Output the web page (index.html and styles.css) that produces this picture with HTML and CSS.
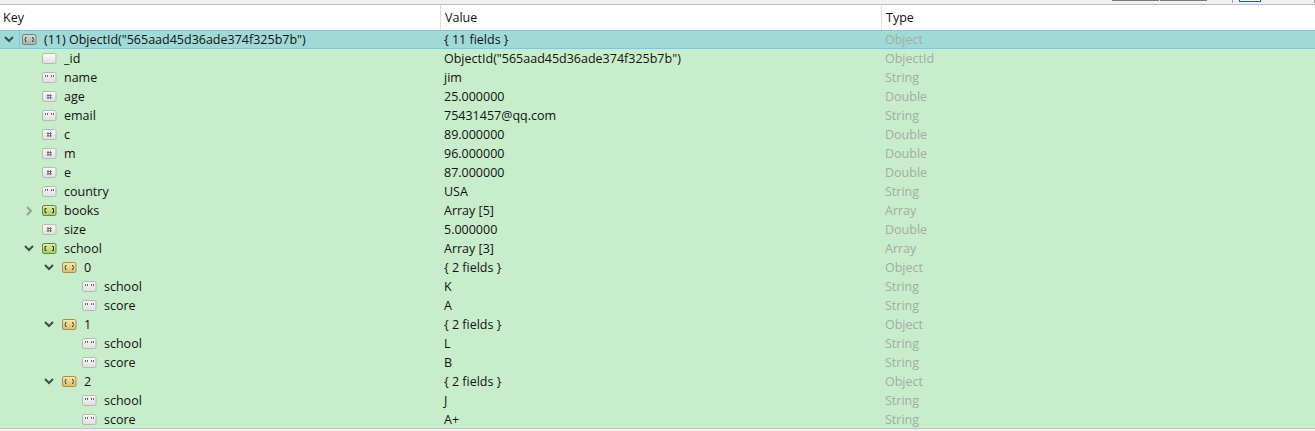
FILE: index.html
```html
<!DOCTYPE html>
<html lang="en">
<head>
<meta charset="utf-8">
<title>Document tree</title>
<link rel="stylesheet" href="styles.css">
</head>
<body>
<svg class="defs" width="0" height="0" aria-hidden="true">
  <defs>
    <linearGradient id="gw" x1="0" y1="0" x2="0" y2="1"><stop offset="0" stop-color="#fcfcfc"/><stop offset="1" stop-color="#dedede"/></linearGradient>
    <linearGradient id="gg" x1="0" y1="0" x2="0" y2="1"><stop offset="0" stop-color="#e4eea8"/><stop offset="1" stop-color="#a8cc62"/></linearGradient>
    <linearGradient id="gy" x1="0" y1="0" x2="0" y2="1"><stop offset="0" stop-color="#f6e9b2"/><stop offset="1" stop-color="#d8bd70"/></linearGradient>
    <linearGradient id="gt" x1="0" y1="0" x2="0" y2="1"><stop offset="0" stop-color="#d4dcd8"/><stop offset="1" stop-color="#a4b0ab"/></linearGradient>
    <symbol id="i-blank" viewBox="0 0 16 12"><rect x=".5" y=".5" width="13.500" height="10" rx="1.500" fill="url(#gw)" stroke="#b8b8b8"/></symbol>
    <symbol id="i-str" viewBox="0 0 16 12"><rect x=".5" y=".5" width="13.500" height="10" rx="1.500" fill="url(#gw)" stroke="#b8b8b8"/><path d="M3.500 3v2M5.500 3v2M9.500 3v2M11.500 3v2" stroke="#666" fill="none"/></symbol>
    <symbol id="i-num" viewBox="0 0 16 12"><rect x=".5" y=".5" width="13.500" height="10" rx="1.500" fill="url(#gw)" stroke="#b8b8b8"/><path d="M6 3v5M8.500 3v5M4.800 4.500h5M4.800 6.800h5" stroke="#666" stroke-width=".9" fill="none"/></symbol>
    <symbol id="i-arr" viewBox="0 0 16 12"><rect x=".5" y=".5" width="13.500" height="10" rx="1.500" fill="url(#gg)" stroke="#5f8a3c"/><path d="M4.500 3.500h-1.500v4h1.500M10 3.500h1.500v4h-1.500" stroke="#1f3310" fill="none"/></symbol>
    <symbol id="i-obj" viewBox="0 0 16 12"><rect x=".5" y=".5" width="13.500" height="10" rx="1.500" fill="url(#gy)" stroke="#a88f50"/><path d="M4.500 3.500h-1v1.500l-.8.500.8.500v1.500h1M10 3.500h1v1.500l.8.500-.8.500v1.500h-1" stroke="#4a3c18" stroke-width=".9" fill="none"/></symbol>
    <symbol id="i-root" viewBox="0 0 16 12"><rect x=".5" y=".5" width="13.500" height="10" rx="1.500" fill="url(#gt)" stroke="#76847f"/><path d="M4.500 3.500h-1v1.500l-.8.500.8.500v1.500h1M10 3.500h1v1.500l.8.500-.8.500v1.500h-1" stroke="#2c3330" stroke-width=".9" fill="none"/></symbol>
    <symbol id="c-open" viewBox="0 0 10 7"><path d="M1 1l4 4 4-4" fill="none" stroke="#3f4f46" stroke-width="2"/></symbol>
    <symbol id="c-closed" viewBox="0 0 7 10"><path d="M1 1l4 4-4 4" fill="none" stroke="#8fa596" stroke-width="2"/></symbol>
  </defs>
</svg>
<div class="topstrip">
  <span class="tab"></span><span class="tab"></span>
  <span class="sep sep-a"></span><span class="blue"></span><span class="sep sep-b"></span>
</div>
<div class="grid-row header">
  <div class="hcell">Key</div><div class="hcell">Value</div><div class="hcell">Type</div>
</div>
<div class="tree">
  <div class="grid-row row selected">
    <div class="key lvl0"><svg class="chev-open"><use href="#c-open"/></svg><svg class="icon"><use href="#i-root"/></svg><span>(11) ObjectId("565aad45d36ade374f325b7b")</span></div>
    <div class="val">{ 11 fields }</div><div class="type">Object</div>
  </div>
  <div class="grid-row row"><div class="key lvl1"><i class="nochev"></i><svg class="icon"><use href="#i-blank"/></svg><span>_id</span></div><div class="val">ObjectId("565aad45d36ade374f325b7b")</div><div class="type">ObjectId</div></div>
  <div class="grid-row row"><div class="key lvl1"><i class="nochev"></i><svg class="icon"><use href="#i-str"/></svg><span>name</span></div><div class="val">jim</div><div class="type">String</div></div>
  <div class="grid-row row"><div class="key lvl1"><i class="nochev"></i><svg class="icon"><use href="#i-num"/></svg><span>age</span></div><div class="val">25.000000</div><div class="type">Double</div></div>
  <div class="grid-row row"><div class="key lvl1"><i class="nochev"></i><svg class="icon"><use href="#i-str"/></svg><span>email</span></div><div class="val">75431457@qq.com</div><div class="type">String</div></div>
  <div class="grid-row row"><div class="key lvl1"><i class="nochev"></i><svg class="icon"><use href="#i-num"/></svg><span>c</span></div><div class="val">89.000000</div><div class="type">Double</div></div>
  <div class="grid-row row"><div class="key lvl1"><i class="nochev"></i><svg class="icon"><use href="#i-num"/></svg><span>m</span></div><div class="val">96.000000</div><div class="type">Double</div></div>
  <div class="grid-row row"><div class="key lvl1"><i class="nochev"></i><svg class="icon"><use href="#i-num"/></svg><span>e</span></div><div class="val">87.000000</div><div class="type">Double</div></div>
  <div class="grid-row row"><div class="key lvl1"><i class="nochev"></i><svg class="icon"><use href="#i-str"/></svg><span>country</span></div><div class="val">USA</div><div class="type">String</div></div>
  <div class="grid-row row"><div class="key lvl1"><svg class="chev-closed"><use href="#c-closed"/></svg><svg class="icon"><use href="#i-arr"/></svg><span>books</span></div><div class="val">Array [5]</div><div class="type">Array</div></div>
  <div class="grid-row row"><div class="key lvl1"><i class="nochev"></i><svg class="icon"><use href="#i-num"/></svg><span>size</span></div><div class="val">5.000000</div><div class="type">Double</div></div>
  <div class="grid-row row"><div class="key lvl1"><svg class="chev-open"><use href="#c-open"/></svg><svg class="icon"><use href="#i-arr"/></svg><span>school</span></div><div class="val">Array [3]</div><div class="type">Array</div></div>
  <div class="grid-row row"><div class="key lvl2"><svg class="chev-open"><use href="#c-open"/></svg><svg class="icon"><use href="#i-obj"/></svg><span>0</span></div><div class="val">{ 2 fields }</div><div class="type">Object</div></div>
  <div class="grid-row row"><div class="key lvl3"><i class="nochev"></i><svg class="icon"><use href="#i-str"/></svg><span>school</span></div><div class="val">K</div><div class="type">String</div></div>
  <div class="grid-row row"><div class="key lvl3"><i class="nochev"></i><svg class="icon"><use href="#i-str"/></svg><span>score</span></div><div class="val">A</div><div class="type">String</div></div>
  <div class="grid-row row"><div class="key lvl2"><svg class="chev-open"><use href="#c-open"/></svg><svg class="icon"><use href="#i-obj"/></svg><span>1</span></div><div class="val">{ 2 fields }</div><div class="type">Object</div></div>
  <div class="grid-row row"><div class="key lvl3"><i class="nochev"></i><svg class="icon"><use href="#i-str"/></svg><span>school</span></div><div class="val">L</div><div class="type">String</div></div>
  <div class="grid-row row"><div class="key lvl3"><i class="nochev"></i><svg class="icon"><use href="#i-str"/></svg><span>score</span></div><div class="val">B</div><div class="type">String</div></div>
  <div class="grid-row row"><div class="key lvl2"><svg class="chev-open"><use href="#c-open"/></svg><svg class="icon"><use href="#i-obj"/></svg><span>2</span></div><div class="val">{ 2 fields }</div><div class="type">Object</div></div>
  <div class="grid-row row"><div class="key lvl3"><i class="nochev"></i><svg class="icon"><use href="#i-str"/></svg><span>school</span></div><div class="val">J</div><div class="type">String</div></div>
  <div class="grid-row row"><div class="key lvl3"><i class="nochev"></i><svg class="icon"><use href="#i-str"/></svg><span>score</span></div><div class="val">A+</div><div class="type">String</div></div>
</div>
<div class="bottomstrip"></div>
</body>
</html>
```
FILE: styles.css
```css
* { box-sizing: border-box; }
html, body { margin: 0; padding: 0; height: 431px; overflow: hidden; }
body {
  font-family: "Open Sans", "Noto Sans", sans-serif;
  font-size: 12.5px;
  color: #111;
  background: #c8edca;
  display: flex;
  flex-direction: column;
}
.defs { position: absolute; }
.topstrip {
  height: 5px;
  flex: none;
  background: #f0f0f0;
  border-bottom: 1px solid #bdbdbd;
  display: flex;
  align-items: flex-start;
  padding-left: 1112px;
}
.tab { height: 1px; width: 47px; background: #7a7a7a; margin-right: 1px; }
.sep { width: 1px; height: 3px; background: #a0a0a0; }
.sep-a { margin-left: 24px; }
.blue {
  width: 22px;
  height: 2px;
  border: 1px solid #1f5f9f;
  border-top: 0;
  margin-left: 6px;
}
.sep-b { margin-left: 53px; }
.grid-row { display: grid; grid-template-columns: 441px 442px 1fr; }
.header { height: 25px; flex: none; background: #fff; }
.hcell {
  line-height: 25px;
  padding-left: 3px;
  border-right: 1px solid #dedede;
}
.hcell:nth-child(2) { padding-left: 4px; margin-right: 1px; }
.hcell:nth-child(3) { border-right: 0; }
.tree { flex: 1; overflow: hidden; }
.row { height: 19px; line-height: 19px; white-space: nowrap; }
.selected {
  background: #a0dad6;
  border-top: 1px solid #7cc6e6;
  border-bottom: 1px solid #7cc6e6;
  line-height: 17px;
}
.selected .key { border-left: 1px solid #7cc6e6; margin-left: 19px; padding-left: 2px; }
.selected .chev-open { margin-left: -18px; margin-right: 8px; }
.key { display: flex; align-items: center; }
.lvl1 { padding-left: 20px; }
.lvl2 { padding-left: 40px; }
.lvl3 { padding-left: 60px; }
.nochev { width: 22px; flex: none; }
.chev-open { width: 10px; height: 7px; margin: 0 8px 0 4px; flex: none; }
.chev-closed { width: 7px; height: 10px; margin: 0 9px 0 6px; flex: none; }
.icon { width: 16px; height: 12px; margin-right: 6px; flex: none; }
.val { padding-left: 3px; }
.type { padding-left: 2px; color: #a3aca5; }
.bottomstrip { height: 3px; flex: none; background: #f0f0f0; border-top: 1px solid #c4c4c4; }
```
